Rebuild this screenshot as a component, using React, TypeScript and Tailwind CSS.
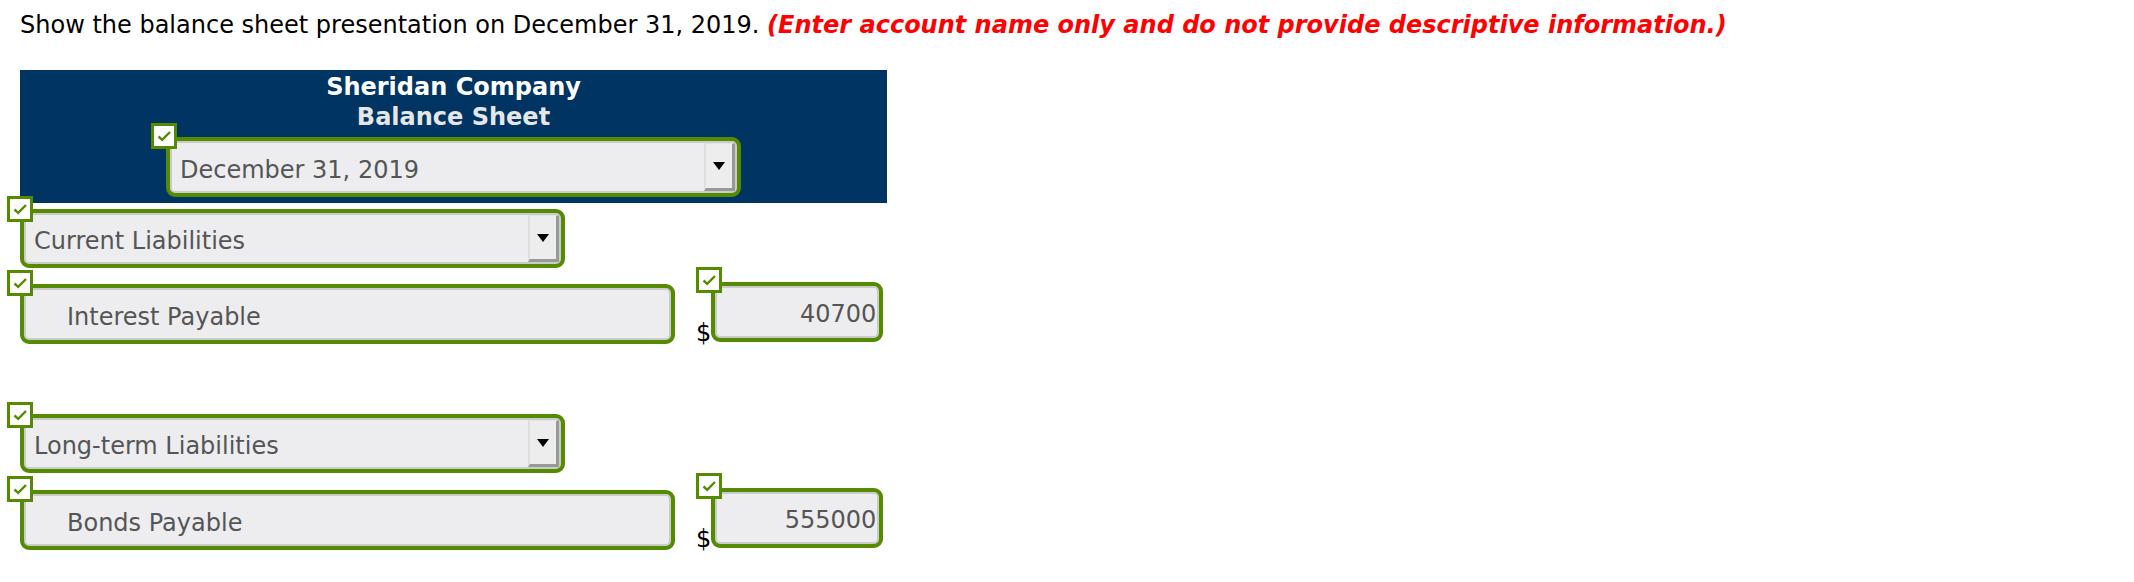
import React from 'react';

const Check: React.FC<{ className: string }> = ({ className }) => (
  <div
    className={`absolute flex h-[26px] w-[26px] items-center justify-center border-[3px] border-[#558b00] bg-white ${className}`}
  >
    <svg width="15" height="12" viewBox="0 0 15 12" fill="none">
      <path d="M1.5 6.5 L5.2 9.8 L13 2" stroke="#558b00" strokeWidth="2.4" />
    </svg>
  </div>
);

// green validated field with the little check badge on its corner
const Field: React.FC<{
  className: string;
  children: React.ReactNode;
  badge?: string;
}> = ({ className, children, badge = '-left-[14px] -top-[14px]' }) => (
  <div className={`relative ${className}`}>
    <div className="h-full rounded-[9px] border-[4px] border-[#558b00] bg-[#558b00]">
      <div className="flex h-full items-center rounded-[5px] border-2 border-[#cbcbcb] bg-[#ededef] text-[24px] text-[#555555]">
        {children}
      </div>
    </div>
    <Check className={badge} />
  </div>
);

const Arrow = () => (
  <div className="flex h-full w-[31px] items-center justify-center border-l-2 border-l-[#dedede] border-r-[3px] border-r-[#999999] border-b-[3px] border-b-[#999999] border-t border-t-[#e5e5e5] bg-[#ededed]">
    <div className="h-0 w-0 border-x-[6px] border-t-[8px] border-x-transparent border-t-black" />
  </div>
);

const Select: React.FC<{ label: string; className: string; badge?: string }> = ({
  label,
  className,
  badge,
}) => (
  <Field className={className} badge={badge}>
    <span className="flex-1 pl-[8px] pt-[5px]">{label}</span>
    <Arrow />
  </Field>
);

const LineItem: React.FC<{ label: string; amount: string }> = ({ label, amount }) => (
  <div className="flex items-start">
    <Field className="mt-[2px] h-[60px] w-[655px]" badge="-left-[13px] -top-[14px]">
      <span className="pl-[41px] pt-[5px]">{label}</span>
    </Field>
    <span className="ml-[21px] mt-[37px] text-[24px] leading-[28px] text-black">$</span>
    <Field className="h-[60px] w-[172px]" badge="-left-[15px] -top-[15px]">
      <span className="flex-1 pr-[1px] pt-[4px] text-right">{amount}</span>
    </Field>
  </div>
);

export default function App() {
  return (
    <div className="min-h-screen bg-white font-['DejaVu_Sans',Verdana,sans-serif]">
      <p className="pl-[20px] pt-[11px] text-[24px] leading-[28px] text-black">
        Show the balance sheet presentation on December 31, 2019.{' '}
        <span className="font-bold italic text-[#ff0000]">
          (Enter account name only and do not provide descriptive information.)
        </span>
      </p>

      <div className="ml-[20px] mt-[31px] w-[867px]">
        <div className="flex h-[133px] flex-col items-center bg-[#003462] pt-[2px]">
          <div className="text-[24px] font-bold leading-[30px] text-white">Sheridan Company</div>
          <div className="text-[24px] font-bold leading-[30px] text-[#e6e6e6]">Balance Sheet</div>
          <Select
            label="December 31, 2019"
            className="mt-[5px] h-[60px] w-[575px]"
            badge="-left-[15px] -top-[14px]"
          />
        </div>

        <Select
          label="Current Liabilities"
          className="mt-[6px] h-[59px] w-[545px]"
          badge="-left-[13px] -top-[13px]"
        />
        <div className="mt-[14px]">
          <LineItem label="Interest Payable" amount="40700" />
        </div>

        <Select
          label="Long-term Liabilities"
          className="mt-[67px] h-[59px] w-[545px]"
          badge="-left-[13px] -top-[12px]"
        />
        <div className="mt-[15px]">
          <LineItem label="Bonds Payable" amount="555000" />
        </div>
      </div>
    </div>
  );
}
